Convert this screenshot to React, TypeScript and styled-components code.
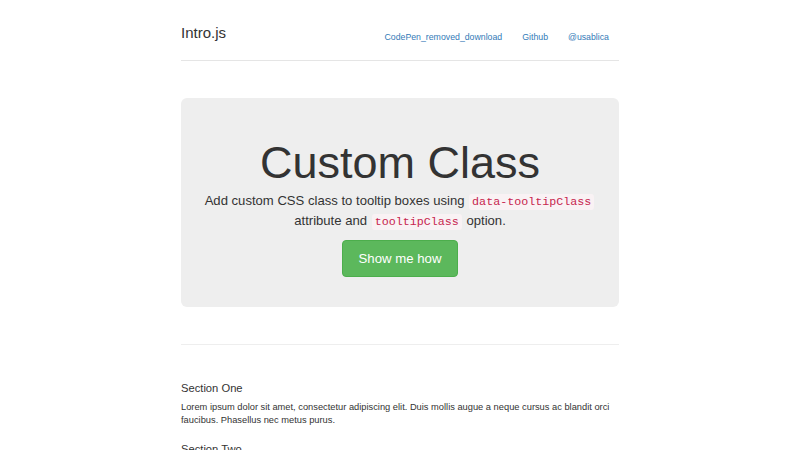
import React from "react";
import styled, { createGlobalStyle } from "styled-components";

const Global = createGlobalStyle`
  html, body { margin: 0; padding: 0; background: #fff; }
  body {
    font-family: "Liberation Sans", Arial, Helvetica, sans-serif;
    color: #333;
  }
  * { box-sizing: border-box; }
`;

const Container = styled.div`
  width: 438px;
  margin: 0 auto;
`;

const Header = styled.header`
  display: flex;
  justify-content: space-between;
  align-items: flex-start;
  height: 61px;
  border-bottom: 1px solid #e5e5e5;
`;

const Brand = styled.h3`
  margin: 23px 0 0;
  font-size: 15px;
  line-height: 20px;
  font-weight: 400;
  color: #333;
`;

const Nav = styled.nav`
  display: flex;
  margin-top: 30px;
`;

const NavLink = styled.a`
  font-size: 8.75px;
  line-height: 14px;
  padding: 0 10px;
  color: #337ab7;
  text-decoration: none;
`;

const Jumbotron = styled.section`
  margin-top: 37px;
  background: #eee;
  border-radius: 6px;
  padding: 40px 20px 30px;
  text-align: center;
`;

const Title = styled.h1`
  margin: 0;
  font-size: 45px;
  line-height: 49.5px;
  font-weight: 400;
  color: #333;
`;

const Lead = styled.p`
  margin: 3px 0 9px;
  font-size: 13.1px;
  line-height: 20px;
  color: #333;
`;

const Code = styled.code`
  font-family: "Liberation Mono", "Courier New", monospace;
  font-size: 11.7px;
  line-height: 1;
  color: #c7254e;
  background: #f9f2f4;
  padding: 1px 3px;
  border-radius: 3px;
  margin: 0 1px;
`;

const Button = styled.a`
  display: inline-block;
  padding: 0 16px;
  height: 37px;
  line-height: 35px;
  font-size: 13.2px;
  color: #fff;
  background: #5cb85c;
  border: 1px solid #4cae4c;
  border-radius: 4px;
  text-decoration: none;
`;

const Divider = styled.hr`
  margin: 37px 0 0;
  border: 0;
  border-top: 1px solid #eee;
`;

const Marketing = styled.div`
  padding-top: 35px;
`;

const SectionTitle = styled.h4`
  margin: 0;
  font-size: 11.2px;
  line-height: 16px;
  font-weight: 400;
  color: #333;
`;

const SectionText = styled.p`
  margin: 5px 0 14px;
  font-size: 9.3px;
  line-height: 13px;
  color: #333;
`;

const sections = [
  {
    title: "Section One",
    text: "Lorem ipsum dolor sit amet, consectetur adipiscing elit. Duis mollis augue a neque cursus ac blandit orci faucibus. Phasellus nec metus purus.",
  },
  {
    title: "Section Two",
    text: "Lorem ipsum dolor sit amet, consectetur adipiscing elit. Duis mollis augue a neque cursus ac blandit orci faucibus. Phasellus nec metus purus.",
  },
  {
    title: "Section Three",
    text: "Lorem ipsum dolor sit amet, consectetur adipiscing elit. Duis mollis augue a neque cursus ac blandit orci faucibus. Phasellus nec metus purus.",
  },
];

export default function App() {
  return (
    <>
      <Global />
      <Container>
        <Header>
          <Brand>Intro.js</Brand>
          <Nav>
            <NavLink href="#">CodePen_removed_download</NavLink>
            <NavLink href="#">Github</NavLink>
            <NavLink href="#">@usablica</NavLink>
          </Nav>
        </Header>
        <Jumbotron>
          <Title>Custom Class</Title>
          <Lead>
            Add custom CSS class to tooltip boxes using <Code>data-tooltipClass</Code>
            <br />
            attribute and <Code>tooltipClass</Code> option.
          </Lead>
          <Button href="#">Show me how</Button>
        </Jumbotron>
        <Divider />
        <Marketing>
          {sections.map((s) => (
            <div key={s.title}>
              <SectionTitle>{s.title}</SectionTitle>
              <SectionText>{s.text}</SectionText>
            </div>
          ))}
        </Marketing>
      </Container>
    </>
  );
}
